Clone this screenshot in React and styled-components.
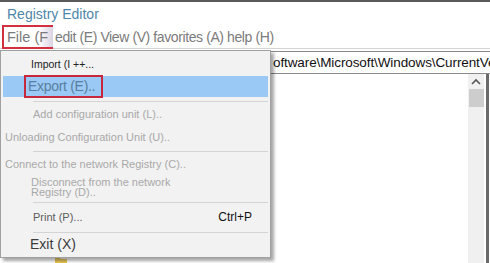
import React from 'react';
import styled, { createGlobalStyle } from 'styled-components';

const GlobalStyle = createGlobalStyle`
  html, body {
    margin: 0;
    padding: 0;
    background: #ffffff;
    overflow: hidden;
  }
  body {
    font-family: "Liberation Sans", Arial, sans-serif;
  }
`;

// h = row height, pb = bottom padding (lifts the text a little)
const menuItems = [
  { label: 'Import (I ++...', tone: 'normal', indent: 31, size: 10.5, h: 23, pb: 0 },
  { label: 'Export (E)..', tone: 'active', indent: 24, size: 14, h: 21, pb: 0, boxed: true },
  { sep: true },
  { label: 'Add configuration unit (L)..', tone: 'disabled', indent: 33, size: 11, h: 23, pb: 4 },
  { label: 'Unloading Configuration Unit (U)..', tone: 'disabled', indent: 5, size: 11, h: 23, pb: 4 },
  { sep: true },
  { label: 'Connect to the network Registry (C)..', tone: 'disabled', indent: 5, size: 11, h: 23, pb: 4 },
  { label: 'Disconnect from the network\nRegistry (D)..', tone: 'disabled', indent: 31, size: 11, h: 24, pb: 5, tall: true },
  { sep: true },
  { label: 'Print (P)...', tone: 'print', indent: 33, size: 11, h: 26, pb: 2, shortcut: 'Ctrl+P' },
  { sep: true },
  { label: 'Exit (X)', tone: 'exit', indent: 30, size: 14, h: 21, pb: 3 },
];

const App = () => (
  <>
    <GlobalStyle />
    <Window>
      <TitleBar>
        <Title>Registry Editor</Title>
      </TitleBar>
      <MenuBar>
        <FileMark>File (F</FileMark>
        <MenuText>edit (E) View (V) favorites (A) help (H)</MenuText>
      </MenuBar>
      <Body>
        <AddressBar>oftware\Microsoft\Windows\CurrentVersion</AddressBar>
        <Content>
          <Tree>
            <FolderIcon viewBox="0 0 12 10">
              <path d="M0 1h5l1 1h6v8H0z" fill="#e8c65a" />
            </FolderIcon>
          </Tree>
          <ScrollBar>
            <ScrollArrow viewBox="0 0 10 8">
              <path d="M1 6l4-4 4 4" fill="none" stroke="#555" strokeWidth="1.6" />
            </ScrollArrow>
            <Thumb />
          </ScrollBar>
        </Content>
        <Dropdown>
          {menuItems.map((item, i) =>
            item.sep ? (
              <Separator key={i} />
            ) : (
              <Item
                key={i}
                $tone={item.tone}
                $indent={item.indent}
                $size={item.size}
                $h={item.h}
                $pb={item.pb}
                $tall={item.tall}
              >
                {item.boxed ? <Boxed>{item.label}</Boxed> : <Label>{item.label}</Label>}
                {item.shortcut && <Shortcut>{item.shortcut}</Shortcut>}
              </Item>
            )
          )}
        </Dropdown>
      </Body>
    </Window>
  </>
);

const Window = styled.div`
  width: 490px;
  height: 263px;
  display: flex;
  flex-direction: column;
  border-top: 2px solid #5a5a5a;
  box-sizing: border-box;
  overflow: hidden;
  background: #fff;
`;

const TitleBar = styled.div`
  height: 24px;
  display: flex;
  align-items: center;
  padding-left: 7px;
`;

const Title = styled.span`
  font-size: 14px;
  color: #4f87aa;
`;

const MenuBar = styled.div`
  height: 22px;
  display: flex;
  align-items: center;
  font-size: 14px;
  color: #7b7b7b;
  border-bottom: 1px solid #d4d4d4;
`;

const FileMark = styled.span`
  padding: 2px 0 2px 3px;
  margin-left: 2px;
  border: 2px solid #d2303f;
  border-right: none;
  width: 51px;
  box-sizing: border-box;
  white-space: nowrap;
  overflow: hidden;
  font-size: 14.5px;
  background: linear-gradient(90deg, rgba(255,255,255,0) 70%, rgba(210,200,220,0.8));
`;

const MenuText = styled.span`
  white-space: nowrap;
  margin-left: 2px;
  letter-spacing: -0.4px;
`;

const Body = styled.div`
  position: relative;
  flex: 1;
  display: flex;
  flex-direction: column;
`;

const AddressBar = styled.div`
  height: 21px;
  margin: 2px 0 0 269px;
  border: 1px solid #8a8a8a;
  border-right: none;
  font-size: 13.5px;
  letter-spacing: -0.1px;
  line-height: 21px;
  color: #111;
  padding-left: 3px;
  white-space: nowrap;
  overflow: hidden;
`;

const Content = styled.div`
  flex: 1;
  display: flex;
  border-right: 3px solid #6a6a6a;
  margin-right: 1px;
`;

const Tree = styled.div`
  flex: 1;
  display: flex;
  align-items: flex-end;
  padding-left: 55px;
`;

const FolderIcon = styled.svg`
  width: 12px;
  height: 10px;
  margin-bottom: -4px;
`;

const ScrollBar = styled.div`
  width: 16px;
  margin-right: 2px;
  background: #f0f0f0;
  display: flex;
  flex-direction: column;
  align-items: center;
  padding-top: 4px;
`;

const ScrollArrow = styled.svg`
  width: 10px;
  height: 8px;
`;

const Thumb = styled.div`
  width: 15px;
  height: 18px;
  margin-top: 3px;
  background: #cdcdcd;
`;

const Dropdown = styled.div`
  position: absolute;
  left: 0;
  top: 1px;
  width: 271px;
  padding: 1px 0;
  background: #f2f2f2;
  border: 1px solid #a0a0a0;
  box-sizing: border-box;
  box-shadow: 3px 3px 3px rgba(0, 0, 0, 0.35);
  display: flex;
  flex-direction: column;
`;

const toneColors = {
  normal: '#222',
  active: '#5a7e9f',
  disabled: '#a9a9a9',
  print: '#5c5c5c',
  exit: '#3c3c3c',
};

const Item = styled.div`
  display: flex;
  align-items: center;
  box-sizing: border-box;
  height: ${(p) => p.$h}px;
  margin: ${(p) => (p.$tone === 'active' ? '1px 2px 3px' : '0 2px')};
  padding-left: ${(p) => p.$indent - 3}px;
  padding-right: 16px;
  padding-bottom: ${(p) => p.$pb}px;
  font-size: ${(p) => p.$size}px;
  line-height: ${(p) => (p.$tall ? 10 : 14)}px;
  color: ${(p) => toneColors[p.$tone]};
  background: ${(p) => (p.$tone === 'active' ? '#99c9f4' : 'transparent')};
  white-space: pre-line;
`;

const Label = styled.span`
  flex: 1;
`;

const Boxed = styled.span`
  width: 79px;
  height: 23px;
  margin-top: -1px;
  padding-left: 2px;
  box-sizing: border-box;
  border: 2px solid #c7283c;
  line-height: 19px;
  letter-spacing: -0.3px;
  white-space: nowrap;
`;

const Shortcut = styled.span`
  color: #111;
  font-size: 12px;
`;

const Separator = styled.div`
  height: 1px;
  flex-shrink: 0;
  margin: 1px 2px 2px 32px;
  background: #d4d4d4;
`;

export default App;
